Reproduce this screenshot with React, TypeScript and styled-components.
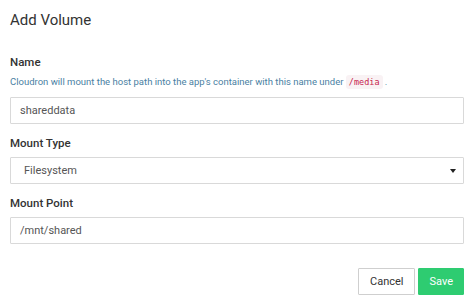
import React from "react";
import styled, { createGlobalStyle } from "styled-components";

const GlobalStyle = createGlobalStyle`
  html, body {
    margin: 0;
    padding: 0;
    background: #ffffff;
    font-family: Roboto, "Liberation Sans", sans-serif;
  }
`;

const Dialog = styled.div`
  width: 474px;
  height: 305px;
  box-sizing: border-box;
  padding: 10px 10px 0 10px;
  display: flex;
  flex-direction: column;
  background: #fff;
`;

const Title = styled.h4`
  margin: 0;
  font-size: 15px;
  font-weight: 400;
  color: #333;
  line-height: 20px;
  height: 20px;
`;

const Body = styled.div`
  display: flex;
  flex-direction: column;
  padding-top: 24px;
`;

const Group = styled.div`
  display: flex;
  flex-direction: column;
  & + & {
    margin-top: 11px;
  }
`;

const Label = styled.label`
  font-size: 11.5px;
  font-weight: 500;
  color: #333;
  line-height: 16px;
  margin-bottom: 6px;
`;

const Help = styled.p`
  margin: -2px 0 7px 0;
  font-size: 9.5px;
  line-height: 16px;
  color: #4a7fa3;
`;

const Code = styled.code`
  font-family: "DejaVu Sans Mono", "Liberation Mono", monospace;
  font-size: 8.5px;
  color: #c7254e;
  background: #f9f2f4;
  padding: 2px 3px;
  border-radius: 3px;
`;

const Field = styled.div<{ $indent?: number }>`
  height: 27px;
  box-sizing: border-box;
  border: 1px solid #d9d9d9;
  border-radius: 1px;
  display: flex;
  align-items: center;
  padding: 0 7px 0 ${(p) => p.$indent ?? 9}px;
  font-size: 11px;
  color: #555;
`;

const Caret = styled.span`
  margin-left: auto;
  width: 0;
  height: 0;
  border-left: 3.5px solid transparent;
  border-right: 3.5px solid transparent;
  border-top: 4px solid #222;
`;

const Footer = styled.div`
  display: flex;
  justify-content: flex-end;
  gap: 3px;
  margin-top: 24px;
`;

const Button = styled.button<{ $primary?: boolean }>`
  height: 27px;
  box-sizing: border-box;
  padding: 0 ${(p) => (p.$primary ? 10 : 11)}px;
  font-family: Roboto, "Liberation Sans", sans-serif;
  font-size: 11px;
  border-radius: 1px;
  border: 1px solid ${(p) => (p.$primary ? "#2ecc71" : "#cfcfcf")};
  background: ${(p) => (p.$primary ? "#2ecc71" : "#fff")};
  color: ${(p) => (p.$primary ? "#fff" : "#333")};
`;

export default function App() {
  return (
    <>
      <GlobalStyle />
      <Dialog>
        <Title>Add Volume</Title>
        <Body>
          <Group>
            <Label>Name</Label>
            <Help>
              Cloudron will mount the host path into the app's container with this name under{" "}
              <Code>/media</Code> .
            </Help>
            <Field>shareddata</Field>
          </Group>
          <Group>
            <Label>Mount Type</Label>
            <Field $indent={13}>
              Filesystem
              <Caret />
            </Field>
          </Group>
          <Group>
            <Label>Mount Point</Label>
            <Field>/mnt/shared</Field>
          </Group>
        </Body>
        <Footer>
          <Button>Cancel</Button>
          <Button $primary>Save</Button>
        </Footer>
      </Dialog>
    </>
  );
}
